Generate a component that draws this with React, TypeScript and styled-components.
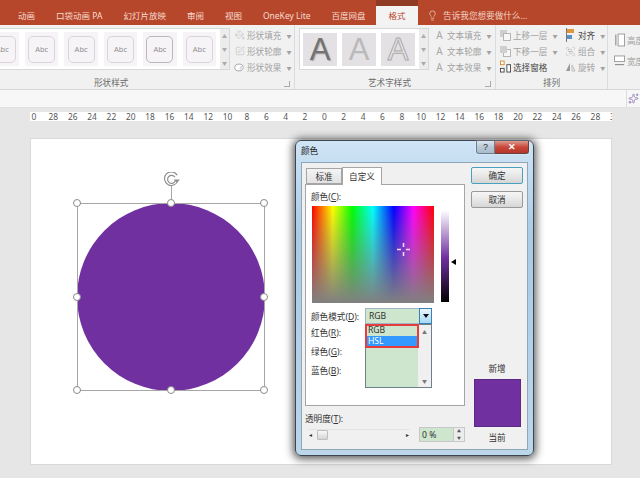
import React from "react";
import styled, { createGlobalStyle } from "styled-components";
import { Lightbulb, PaintBucket, SquarePen, Sparkles, Group as GroupIcon } from "lucide-react";

const Global = createGlobalStyle`
  html, body { margin: 0; padding: 0; width: 640px; height: 478px; overflow: hidden; background: #e6e6e6; }
  body { font-family: "Noto Sans", "Noto Sans CJK SC", sans-serif; font-size: 8.6px; }
  * { box-sizing: border-box; }
`;
const Page = styled.div`width: 640px; height: 478px; display: flex; flex-direction: column; overflow: hidden;`;
const TabBar = styled.div`height: 25px; background: #b7472a; display: flex; align-items: flex-end; padding-left: 7.5px; flex: none;`;
const Tab = styled.div<{ $active?: boolean }>`
  height: ${p => (p.$active ? 25 : 19)}px; padding: ${p => (p.$active ? "7px 12.5px 0" : "0 10.5px")};
  color: ${p => (p.$active ? "#b7472a" : "#f6dcd3")};
  background: ${p => (p.$active ? "linear-gradient(#8f3a22 0 6px, #f3f3f3 6px)" : "transparent")};
  display: flex; align-items: center; white-space: nowrap; font-size: 8.5px; line-height: 12px;
`;
const TellMe = styled.div`height: 19px; margin-left: 9px; display: flex; align-items: center; gap: 5px; color: #f2cfc4; white-space: nowrap;`;
const Ribbon = styled.div`height: 65px; flex: none; background: #f1f1f1; border-bottom: 1px solid #d6d6d6; display: flex; overflow: hidden;`;
const RGroup = styled.div<{ $w: number }>`width: ${p => p.$w}px; flex: none; border-right: 1px solid #dcdcdc; display: flex; flex-direction: column;`;
const RContent = styled.div`height: 50px; padding-top: 3px; display: flex; align-items: flex-start;`;
const RLabel = styled.div<{ $pl: number }>`height: 15px; padding-left: ${p => p.$pl}px; display: flex; align-items: center; color: #6a6a6a; position: relative; white-space: nowrap;`;
const Launcher = styled.span`position: absolute; right: 4px; bottom: 2px; width: 6px; height: 6px; border-right: 1px solid #aaa; border-bottom: 1px solid #aaa;`;
const Gallery = styled.div<{ $w: number; $ml?: number }>`
  width: ${p => p.$w}px; height: 42px; margin-left: ${p => p.$ml ?? 0}px; background: #fff; border: 1px solid #d8d8d8; border-left-width: ${p => (p.$ml ? 1 : 0)}px;
  display: flex; flex: none; overflow: hidden;
`;
const Thumbs = styled.div<{ $gap: number; $pr: number }>`flex: 1; min-width: 0; display: flex; justify-content: flex-end; align-items: center; gap: ${p => p.$gap}px; padding-right: ${p => p.$pr}px;`;
const AbcCell = styled.div`width: 33.4px; height: 34px; flex: none; background: #f7f4f7; display: flex; align-items: center; justify-content: center;`;
const Abc = styled.div<{ $dark?: boolean }>`
  width: 27px; height: 27px; border: 1px solid ${p => (p.$dark ? "#bdb7bd" : "#dcd4dc")}; border-radius: 5px;
  display: flex; align-items: center; justify-content: center; color: #8f8f8f; font-size: 7.5px;
`;
const ACell = styled.div`width: 34px; height: 33px; flex: none; background: #e3e1e3; display: flex; align-items: center; justify-content: center;`;
const BigA = styled.div<{ $kind: number }>`
  font: 31px/31px "Liberation Sans", sans-serif;
  color: ${p => (p.$kind === 0 ? "#727272" : p.$kind === 1 ? "#b9b9b9" : "#e8e6e8")};
  -webkit-text-stroke: ${p => (p.$kind === 2 ? "1px #aaa" : "0")};
  text-shadow: ${p => (p.$kind === 0 ? "1px 1px 1px #aaa" : "none")};
`;
const Scroller = styled.div`width: 9px; flex: none; margin-left: auto; background: #ececec; display: flex; flex-direction: column; align-items: center; justify-content: space-around; color: #aaa; font-size: 5px;`;
const CmdCol = styled.div<{ $ml: number; $w?: number }>`margin-left: ${p => p.$ml}px; margin-top: -1px; ${p => (p.$w ? `width:${p.$w}px;` : "")} display: flex; flex-direction: column; flex: none;`;
const SizeCol = styled.div`margin: 7px 0 0 6px; display: flex; flex-direction: column; gap: 5px; flex: none;`;
const Cmd = styled.div<{ $dark?: boolean }>`
  height: 16px; display: flex; align-items: center; gap: 2px; white-space: nowrap;
  color: ${p => (p.$dark ? "#444" : "#a2a2a2")};
`;
const CmdIcon = styled.span`width: 11px; height: 12px; display: flex; align-items: center; justify-content: center; flex: none; font-size: 10px; color: #a8a8a8;`;
const Caret = styled.span`margin-left: 3px; font-size: 5px; color: #a2a2a2;`;
const Band = styled.div`height: 18px; flex: none; background: #f7f7f7; border-bottom: 1px solid #e2e2e2; display: flex; justify-content: flex-end;`;
const BandPane = styled.div`width: 14px; border-left: 1px solid #dcdcdc; display: flex; align-items: center; justify-content: center;`;
const RulerArea = styled.div`height: 22px; flex: none; padding: 4px 0 0 30px;`;
const Ruler = styled.div`width: 582px; height: 9px; background: #fff; overflow: hidden; display: flex;`;
const Tick = styled.span`width: 19.36px; flex: none; text-align: center; font-size: 8.4px; line-height: 9px; color: #555; transform: translateX(-5.7px);`;
const Work = styled.div`flex: 1; padding: 8px 28px 13px 30px; display: flex;`;
const Slide = styled.div`position: relative; width: 582px; height: 327px; background: #fff; border: 1px solid #d9d9d9;`;
const Shape = styled.div`position: absolute; left: 46px; top: 64px; width: 188px; height: 188px; border-radius: 50%; background: #7030a0;`;
const Frame = styled.div`position: absolute; left: 46px; top: 64px; width: 188px; height: 188px; border: 1px solid #a6a6a6;`;
const Handle = styled.span<{ $x: number; $y: number }>`
  position: absolute; left: ${p => p.$x * 187 - 5}px; top: ${p => p.$y * 187 - 5}px; width: 8px; height: 8px;
  border-radius: 50%; background: #fff; border: 1px solid #8a8a8a;
`;
const Stem = styled.span`position: absolute; left: 93px; top: -18px; width: 1px; height: 18px; background: #a6a6a6;`;
const Rotate = styled.svg`position: absolute; left: 84px; top: -32px;`;

const Dialog = styled.div`
  position: absolute; left: 264px; top: 1px; width: 239px; height: 316px; padding: 0 5px 5px;
  border: 1px solid #3b4652; border-radius: 6px; background: linear-gradient(#cfe4f5, #a9cbe6 30%, #bcd6ea);
  box-shadow: 0 1px 9px 2px rgba(0,0,0,.65); display: flex; flex-direction: column; color: #333;
`;
const TitleBar = styled.div`height: 21px; flex: none; display: flex; align-items: flex-start; font-size: 8.6px; color: #222;`;
const TitleText = styled.span`margin-top: 4px; line-height: 12px;`;
const WinBtns = styled.div`margin-left: auto; margin-right: -1px; display: flex; height: 13px; box-shadow: 0 0 1px #fff;`;
const HelpBtn = styled.div`width: 19px; background: linear-gradient(#dbe6ef, #b8c8d6 50%, #a9bccb); border: 1px solid #6c7f8f; border-top: 0; border-radius: 0 0 0 3px; color: #333; font: 9px/12px "Liberation Sans", sans-serif; text-align: center;`;
const CloseBtn = styled.div`width: 34px; background: linear-gradient(#dd9a8f, #c9483a 50%, #b5352a); border: 1px solid #6c4040; border-top: 0; border-left: 0; border-radius: 0 0 3px 0; color: #fff; font: bold 9px/12px "Liberation Sans", sans-serif; text-align: center;`;
const DBody = styled.div`flex: 1; background: #f0f0f0; border: 1px solid #8fa5b8; padding: 4px 4px 0 3px; display: flex;`;
const LeftCol = styled.div`width: 160px; flex: none; display: flex; flex-direction: column;`;
const DTabs = styled.div`height: 17px; display: flex; align-items: flex-end; padding-left: 1px;`;
const DTab = styled.div<{ $on?: boolean }>`
  width: ${p => (p.$on ? 40 : 36)}px; height: ${p => (p.$on ? 18 : 16)}px; display: flex; align-items: center; justify-content: center;
  background: ${p => (p.$on ? "#fff" : "linear-gradient(#f4f4f4, #e2e2e2)")}; border: 1px solid #a5a5a5; border-bottom: ${p => (p.$on ? "0" : "1px solid #a5a5a5")};
  position: relative; top: ${p => (p.$on ? 1 : 0)}px;
`;
const Panel = styled.div`height: 222px; background: #fff; border: 1px solid #a5a5a5; padding: 6px 5px 0; flex: none;`;
const Label = styled.div`height: 12px; line-height: 12px; white-space: nowrap;`;
const PickRow = styled.div`display: flex; margin: 3px 0 0 1px; height: 97px;`;
const Spectrum = styled.div`
  position: relative; width: 122px; height: 97px;
  background: linear-gradient(to bottom, rgba(128,128,128,0), #808080),
    linear-gradient(to right, #f00, #ff0 17%, #0f0 33%, #0ff 50%, #00f 67%, #f0f 83%, #f00);
`;
const Cross = styled.svg`position: absolute; left: 85px; top: 37px;`;
const Lum = styled.div`position: relative; width: 8px; height: 92px; margin: 4px 0 0 7px; background: linear-gradient(#fff, #7030a0 52%, #000);`;
const LumArrow = styled.span`position: absolute; left: 10px; top: 49px; width: 0; height: 0; border: 3.5px solid transparent; border-right: 5px solid #000; border-left: 0;`;
const ModeRow = styled.div`display: flex; align-items: center; height: 16px; margin-top: 5px;`;
const ModeLabel = styled.div`width: 54px; flex: none; white-space: nowrap;`;
const Select = styled.div`
  position: relative; width: 67px; height: 16px; background: #cde6cd; border: 1px solid #9fb4c4; display: flex; align-items: center;
  padding-left: 3px; font-size: 8.6px; color: #333;
`;
const SelBtn = styled.div`
  position: absolute; right: -1px; top: -1px; width: 13px; height: 16px; border: 1px solid #3c7fb1;
  background: linear-gradient(#eaf6fd, #a7d9f5); display: flex; align-items: center; justify-content: center;
`;
const SelArrow = styled.span`width: 0; height: 0; border: 3px solid transparent; border-top: 4px solid #111; border-bottom: 0;`;
const List = styled.div`
  position: absolute; left: -1px; top: 15px; width: 67px; height: 64px; background: #cde6cd; border: 1px solid #6f7f8c; z-index: 2; display: flex;
`;
const ListItems = styled.div`flex: 1;`;
const ListItem = styled.div<{ $sel?: boolean }>`
  height: 11px; line-height: 11px; padding-left: 2px;
  background: ${p => (p.$sel ? "#3399ff" : "transparent")}; color: ${p => (p.$sel ? "#fff" : "#333")};
`;
const ListBar = styled.div`width: 13px; flex: none; background: #f0f0f0; display: flex; flex-direction: column; justify-content: space-between; align-items: center; padding: 3px 0; font-size: 5px; color: #777;`;
const RedBox = styled.div`position: absolute; left: -1px; top: 15px; width: 54px; height: 24px; border: 2px solid #e63c3c; z-index: 3;`;
const ValueRows = styled.div``;
const ValueRow = styled.div`height: 19px; line-height: 19px; white-space: nowrap;`;
const Transp = styled.div`margin-top: 7px; height: 12px; line-height: 12px;`;
const SliderRow = styled.div`display: flex; align-items: center; margin-top: 2px; height: 15px;`;
const Track = styled.div`
  position: relative; width: 102px; margin-left: 3px; height: 11px; display: flex; justify-content: space-between; align-items: center; font-size: 5px; color: #333;
  background: #f0f0f0; border-top: 1px solid #e4e4e4;
`;
const Thumb = styled.span`position: absolute; left: 9px; top: 0; width: 11px; height: 10px; background: linear-gradient(#f8f8f8, #d5d5d5); border: 1px solid #bdbdbd; border-radius: 1px;`;
const Percent = styled.div`margin-left: 9px; width: 46px; height: 15px; background: #cde6cd; border: 1px solid #c8c8c8; display: flex; align-items: center; padding-left: 2px; position: relative; font-size: 8.6px;`;
const Spin = styled.div`position: absolute; right: 0; top: 0; bottom: 0; width: 11px; background: #ececec; border-left: 1px solid #c8c8c8; display: flex; flex-direction: column; align-items: center; justify-content: space-around; font-size: 4px; color: #555;`;
const RightCol = styled.div`flex: 1; padding-left: 6px; display: flex; flex-direction: column; align-items: center; width: 58px;`;
const DButton = styled.div<{ $def?: boolean }>`
  width: 52px; height: 17px; margin-bottom: 7px; flex: none; display: flex; align-items: center; justify-content: center; border-radius: 2px;
  border: 1px solid ${p => (p.$def ? "#4aa0bf" : "#9a9a9a")}; background: linear-gradient(#f6f6f6, #e8e8e8 50%, #d5d5d5);
`;
const NewLabel = styled.div`margin-top: 148px; height: 12px; line-height: 12px;`;
const Swatch = styled.div`width: 47px; height: 48px; margin-top: 4px; background: #7030a0; border: 1px solid #5c2a84;`;
const CurLabel = styled.div`margin-top: 5px; height: 12px; line-height: 12px;`;

const abc = [false, false, false, false, true, false];
const ticks = [0, 28, 26, 24, 22, 20, 18, 16, 14, 12, 10, 8, 6, 4, 2, 0, 2, 4, 6, 8, 10, 12, 14, 16, 18, 20, 22, 24, 26, 28, 30];
const hs: [number, number][] = [[0, 0], [.5, 0], [1, 0], [0, .5], [1, .5], [0, 1], [.5, 1], [1, 1]];

const Fill = () => <PaintBucket size={10} strokeWidth={1} />;
const Pen = () => <SquarePen size={10} strokeWidth={1} />;
const Eff = () => <svg width="11" height="9" viewBox="0 0 11 9"><ellipse cx="5" cy="4.5" rx="4.2" ry="3.4" fill="#fff" stroke="#aaa" /><circle cx="7.5" cy="5" r="2" fill="#ddd" /></svg>;
const Pane = () => <svg width="12" height="14" viewBox="0 0 12 14"><rect x=".5" y=".5" width="4" height="4" fill="#fff" stroke="#d28a2e" /><rect x=".5" y="8.5" width="4" height="4" fill="#fff" stroke="#444" /><rect x="7.5" y="4.5" width="4" height="8" fill="#fff" stroke="#444" /></svg>;
const Up = () => <svg width="11" height="11" viewBox="0 0 11 11"><rect x="0" y="0" width="7" height="7" fill="#cfcfcf" /><rect x="3.5" y="3.5" width="7" height="7" fill="#f6f6f6" stroke="#b5b5b5" /></svg>;
const Down = () => <svg width="11" height="11" viewBox="0 0 11 11"><rect x="3.5" y="3.5" width="7" height="7" fill="#f6f6f6" stroke="#b5b5b5" /><rect x="0" y="0" width="7" height="7" fill="#cfcfcf" /></svg>;
const Align = () => <svg width="11" height="14" viewBox="0 0 11 14"><rect x="1" y="0" width="1" height="14" fill="#777" /><rect x="2" y="1" width="7" height="4" fill="#e0973a" /><rect x="2" y="7" width="5" height="4" fill="#5b8fc7" /></svg>;
const Turn = () => <svg width="11" height="10" viewBox="0 0 11 10"><path d="M1 9 5 1v8z" fill="#9a9a9a" /><path d="M7 9V3l3 6z" fill="none" stroke="#bbb" /></svg>;
const Size = () => <svg width="12" height="14" viewBox="0 0 12 14"><rect x="4.5" y=".5" width="7" height="13" fill="#fff" stroke="#999" /><path d="M2 1v12" stroke="#777" /></svg>;
const SizeW = () => <svg width="12" height="12" viewBox="0 0 12 12"><rect x=".5" y=".5" width="11" height="6" fill="#fff" stroke="#999" /><path d="M1 10h10" stroke="#777" /></svg>;

export default function App() {
  return (
    <Page>
      <Global />
      <TabBar>
        {["动画", "口袋动画 PA", "幻灯片放映", "审阅", "视图", "OneKey Lite", "百度网盘"].map(t => <Tab key={t}>{t}</Tab>)}
        <Tab $active>格式</Tab>
        <TellMe><Lightbulb size={11} strokeWidth={1.2} color="#fff" />告诉我您想要做什么...</TellMe>
      </TabBar>
      <Ribbon>
        <RGroup $w={295}>
          <RContent>
            <Gallery $w={230}>
              <Thumbs $gap={6} $pr={4}>
                {abc.map((d, i) => <AbcCell key={i}><Abc $dark={d}>Abc</Abc></AbcCell>)}
              </Thumbs>
              <Scroller><span>▲</span><span>▼</span><span>▼</span></Scroller>
            </Gallery>
            <CmdCol $ml={4}>
              <Cmd><CmdIcon><Fill /></CmdIcon>形状填充<Caret>▼</Caret></Cmd>
              <Cmd><CmdIcon><Pen /></CmdIcon>形状轮廓<Caret>▼</Caret></Cmd>
              <Cmd><CmdIcon><Eff /></CmdIcon>形状效果<Caret>▼</Caret></Cmd>
            </CmdCol>
          </RContent>
          <RLabel $pl={94}>形状样式<Launcher /></RLabel>
        </RGroup>
        <RGroup $w={201}>
          <RContent>
            <Gallery $w={130} $ml={4}>
              <Thumbs $gap={5} $pr={4}>
                {[0, 1, 2].map(k => <ACell key={k}><BigA $kind={k}>A</BigA></ACell>)}
              </Thumbs>
              <Scroller><span>▲</span><span>▼</span><span>▼</span></Scroller>
            </Gallery>
            <CmdCol $ml={5}>
              <Cmd><CmdIcon>A</CmdIcon>文本填充<Caret>▼</Caret></Cmd>
              <Cmd><CmdIcon>A</CmdIcon>文本轮廓<Caret>▼</Caret></Cmd>
              <Cmd><CmdIcon>A</CmdIcon>文本效果<Caret>▼</Caret></Cmd>
            </CmdCol>
          </RContent>
          <RLabel $pl={73}>艺术字样式<Launcher /></RLabel>
        </RGroup>
        <RGroup $w={112}>
          <RContent>
            <CmdCol $ml={4} $w={64}>
              <Cmd><CmdIcon><Up /></CmdIcon>上移一层<Caret>▼</Caret></Cmd>
              <Cmd><CmdIcon><Down /></CmdIcon>下移一层<Caret>▼</Caret></Cmd>
              <Cmd $dark><CmdIcon><Pane /></CmdIcon>选择窗格</Cmd>
            </CmdCol>
            <CmdCol $ml={1}>
              <Cmd $dark><CmdIcon><Align /></CmdIcon>对齐<Caret>▼</Caret></Cmd>
              <Cmd><CmdIcon><GroupIcon size={11} strokeWidth={1} /></CmdIcon>组合<Caret>▼</Caret></Cmd>
              <Cmd><CmdIcon><Turn /></CmdIcon>旋转<Caret>▼</Caret></Cmd>
            </CmdCol>
          </RContent>
          <RLabel $pl={47}>排列</RLabel>
        </RGroup>
        <SizeCol>
          <Cmd><CmdIcon><Size /></CmdIcon>高度</Cmd>
          <Cmd><CmdIcon><SizeW /></CmdIcon>宽度</Cmd>
        </SizeCol>
      </Ribbon>
      <Band><BandPane><Sparkles size={11} strokeWidth={1.4} color="#7a5aa8" /></BandPane></Band>
      <RulerArea>
        <Ruler>{ticks.map((t, i) => <Tick key={i}>{t}</Tick>)}</Ruler>
      </RulerArea>
      <Work>
        <Slide>
          <Shape />
          <Frame>
            <Stem />
            <Rotate width="20" height="15" viewBox="0 0 20 15" fill="none" stroke="#8f8f8f">
              <path d="M15.2 3.2A6.8 6.8 0 1 0 16 8" strokeWidth="1.2" />
              <path d="M13 5.2A4 4 0 1 0 13.4 8.6" strokeWidth="1.2" />
              <path d="M11.5 7.5h6.5l-3.2 3.2z" fill="#8f8f8f" stroke="none" />
            </Rotate>
            {hs.map(([x, y], i) => <Handle key={i} $x={x} $y={y} />)}
          </Frame>
          <Dialog>
            <TitleBar>
              <TitleText>颜色</TitleText>
              <WinBtns><HelpBtn>?</HelpBtn><CloseBtn>✕</CloseBtn></WinBtns>
            </TitleBar>
            <DBody>
              <LeftCol>
                <DTabs><DTab>标准</DTab><DTab $on>自定义</DTab></DTabs>
                <Panel>
                  <Label>颜色(<u>C</u>):</Label>
                  <PickRow>
                    <Spectrum>
                      <Cross width="13" height="13" viewBox="0 0 13 13">
                        <path d="M6.5 0v4M6.5 9v4M0 6.5h4M9 6.5h4" stroke="#f6d8f6" strokeWidth="1.6" />
                      </Cross>
                    </Spectrum>
                    <Lum><LumArrow /></Lum>
                  </PickRow>
                  <ModeRow>
                    <ModeLabel>颜色模式(<u>D</u>):</ModeLabel>
                    <Select>
                      RGB
                      <SelBtn><SelArrow /></SelBtn>
                      <List>
                        <ListItems>
                          <ListItem>RGB</ListItem>
                          <ListItem $sel>HSL</ListItem>
                        </ListItems>
                        <ListBar><span>▲</span><span>▼</span></ListBar>
                      </List>
                      <RedBox />
                    </Select>
                  </ModeRow>
                  <ValueRows>
                    <ValueRow>红色(<u>R</u>):</ValueRow>
                    <ValueRow>绿色(<u>G</u>):</ValueRow>
                    <ValueRow>蓝色(<u>B</u>):</ValueRow>
                  </ValueRows>
                </Panel>
                <Transp>透明度(<u>T</u>):</Transp>
                <SliderRow>
                  <Track><span>◄</span><Thumb /><span>►</span></Track>
                  <Percent>0 %<Spin><span>▲</span><span>▼</span></Spin></Percent>
                </SliderRow>
              </LeftCol>
              <RightCol>
                <DButton $def>确定</DButton>
                <DButton>取消</DButton>
                <NewLabel>新增</NewLabel>
                <Swatch />
                <CurLabel>当前</CurLabel>
              </RightCol>
            </DBody>
          </Dialog>
        </Slide>
      </Work>
    </Page>
  );
}
